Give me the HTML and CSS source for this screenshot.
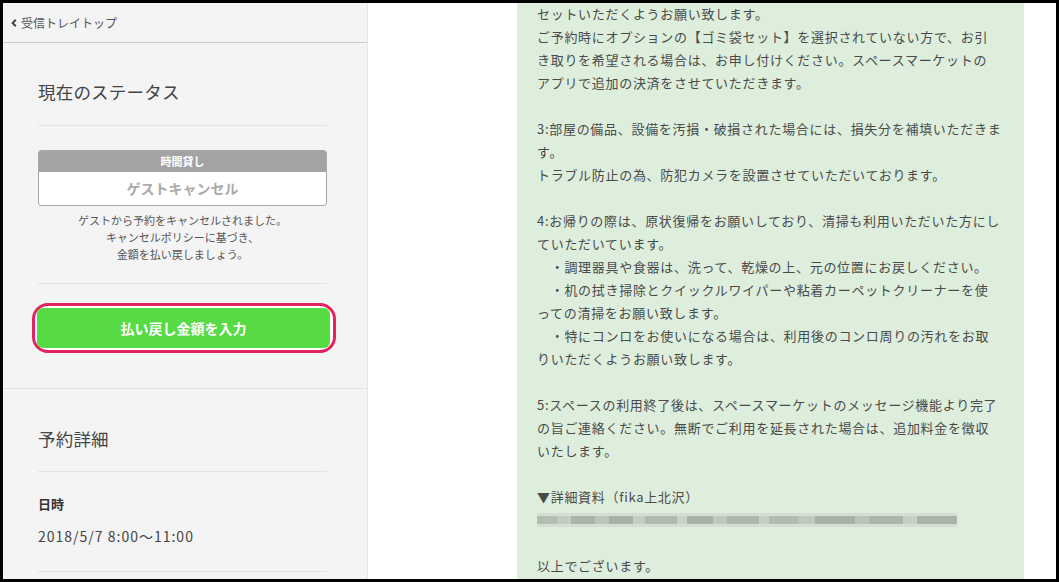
FILE: index.html
```html
<!DOCTYPE html>
<html>
  <head>
    <meta charset="utf-8">
    <title>予約詳細</title>
    <link rel="stylesheet" href="styles.css">
  </head>
  <body>
    <div class="frame">
      <aside class="sidebar">
        <div class="top-bar">
          <a class="back-link">
            <svg class="chevron" width="6" height="8" viewBox="0 0 6 8">
              <path d="M4.8 0.8 L1.6 4 L4.8 7.2" fill="none" stroke="#444" stroke-width="2"/>
            </svg>
            受信トレイトップ
          </a>
        </div>

        <section class="panel">
          <h2 class="panel-title">現在のステータス</h2>
          <hr class="rule">
          <div class="status-card">
            <div class="status-type">時間貸し</div>
            <div class="status-label">ゲストキャンセル</div>
          </div>
          <p class="status-note">
            ゲストから予約をキャンセルされました。<br>
            キャンセルポリシーに基づき、<br>
            金額を払い戻しましょう。
          </p>
          <hr class="rule rule-action">
          <div class="highlight">
            <button class="refund-button">払い戻し金額を入力</button>
          </div>
        </section>

        <section class="panel panel-detail">
          <h2 class="panel-title">予約詳細</h2>
          <hr class="rule">
          <div class="detail-label">日時</div>
          <div class="detail-value">2018/5/7 8:00〜11:00</div>
          <hr class="rule rule-detail">
        </section>
      </aside>

      <main class="content">
        <div class="message">
          <p class="message-text">セットいただくようお願い致します。<br>ご予約時にオプションの【ゴミ袋セット】を選択されていない方で、お引<br>き取りを希望される場合は、お申し付けください。スペースマーケットの<br>アプリで追加の決済をさせていただきます。<br><br>3:部屋の備品、設備を汚損・破損された場合には、損失分を補填いただきま<br>す。<br>トラブル防止の為、防犯カメラを設置させていただいております。<br><br>4:お帰りの際は、原状復帰をお願いしており、清掃も利用いただいた方にし<br>ていただいています。<br>　・調理器具や食器は、洗って、乾燥の上、元の位置にお戻しください。<br>　・机の拭き掃除とクイックルワイパーや粘着カーペットクリーナーを使<br>っての清掃をお願い致します。<br>　・特にコンロをお使いになる場合は、利用後のコンロ周りの汚れをお取<br>りいただくようお願い致します。<br><br>5:スペースの利用終了後は、スペースマーケットのメッセージ機能より完了<br>の旨ご連絡ください。無断でご利用を延長された場合は、追加料金を徴収<br>いたします。<br><br>▼詳細資料（fika上北沢）<span class="redacted"></span><br>以上でございます。</p>
        </div>
      </main>
    </div>
  </body>
</html>
```

FILE: styles.css
```css
html,
body {
  margin: 0;
  height: 100%;
}

body {
  background: #000;
  padding: 3px;
  box-sizing: border-box;
  font-family: "Noto Sans CJK JP", "Noto Sans", sans-serif;
  color: #444;
}

.frame {
  display: flex;
  height: 576px;
  background: #fff;
  overflow: hidden;
}

/* Sidebar */

.sidebar {
  width: 365px;
  flex-shrink: 0;
  box-sizing: border-box;
  background: #f4f4f4;
  border-right: 1px solid #e6e6e6;
}

.top-bar {
  height: 39px;
  display: flex;
  align-items: center;
  padding-left: 8px;
  border-bottom: 1px solid #cbcbcb;
}

.back-link {
  display: flex;
  align-items: center;
  font-size: 12px;
  color: #555;
  line-height: 16px;
}

.chevron {
  margin-right: 4px;
}

.panel {
  padding: 0 40px 35px 35px;
  border-bottom: 1px solid #e2e2e2;
}

.panel-detail {
  border-bottom: none;
  padding-bottom: 0;
}

.panel-title {
  margin: 37px 0 0;
  font-size: 17.5px;
  font-weight: 400;
  line-height: 24px;
  letter-spacing: 0.2px;
  color: #444;
}

.panel-detail .panel-title {
  margin-top: 38px;
}

.rule {
  border: 0;
  height: 1px;
  background: #e3e3e3;
  margin: 21px 0 0;
}

.panel-detail .rule {
  margin-top: 20px;
}

.rule-action {
  margin-top: 20px;
}

.panel-detail .rule-detail {
  margin-top: 25px;
}

.status-card {
  margin-top: 24px;
  border: 1px solid #a9a9a9;
  border-radius: 3px;
  overflow: hidden;
  background: #fff;
  text-align: center;
}

.status-type {
  height: 21px;
  line-height: 21px;
  background: #a3a3a3;
  color: #fff;
  font-size: 11px;
  font-weight: 700;
}

.status-label {
  height: 33px;
  line-height: 33px;
  color: #aaa;
  font-size: 14px;
  font-weight: 700;
}

.status-note {
  margin: 6px 0 0;
  text-align: center;
  font-size: 11px;
  line-height: 17px;
  color: #555;
}

.highlight {
  margin: 19px 0 0 -6px;
  width: 304px;
  box-sizing: border-box;
  border: 3px solid #e3225f;
  border-radius: 16px;
  padding: 2px 3px 2px 2px;
  background: #fff;
}

.refund-button {
  display: block;
  width: 100%;
  height: 40px;
  border: none;
  border-radius: 6px;
  background: #56db45;
  color: #fff;
  font-family: inherit;
  font-size: 14px;
  font-weight: 700;
  cursor: pointer;
}

.detail-label {
  margin-top: 22px;
  font-size: 13px;
  font-weight: 700;
  line-height: 20px;
  color: #333;
}

.detail-value {
  margin-top: 12px;
  font-size: 14px;
  line-height: 20px;
  letter-spacing: 1px;
  color: #444;
}

/* Message */

.content {
  flex: 1;
  padding-left: 149px;
  background: #fff;
}

.message {
  width: 507px;
  height: 100%;
  box-sizing: border-box;
  padding: 0 20px;
  background: #deeedd;
  overflow: hidden;
}

.message-text {
  margin: -1.5px 0 0;
  font-size: 13px;
  line-height: 23px;
  letter-spacing: 0.7px;
  color: #4a4a4a;
  white-space: nowrap;
}

.redacted {
  display: block;
  width: 420px;
  height: 23px;
  filter: blur(0.6px);
  background:
    linear-gradient(90deg,
      #b3bdb2 0 20px, #c3ccc2 20px 34px, #aab4a9 34px 58px,
      #bcc6bb 58px 72px, #a9b2a8 72px 96px, #c5cec4 96px 108px,
      #b0bab0 108px 140px, #c9d2c8 140px 150px, #a7b1a6 150px 176px,
      #bfc8be 176px 190px, #adb7ac 190px 222px, #c6cfc5 222px 232px,
      #b2bcb1 232px 262px, #c0c9bf 262px 278px, #a8b2a7 278px 318px,
      #bac4b9 318px 332px, #acb6ab 332px 366px, #c7d0c6 366px 380px,
      #a9b3a8 380px 420px) 0 8px / 420px 8px no-repeat,
    linear-gradient(#d3dfd2, #d3dfd2) 0 5px / 420px 14px no-repeat;
}
```
